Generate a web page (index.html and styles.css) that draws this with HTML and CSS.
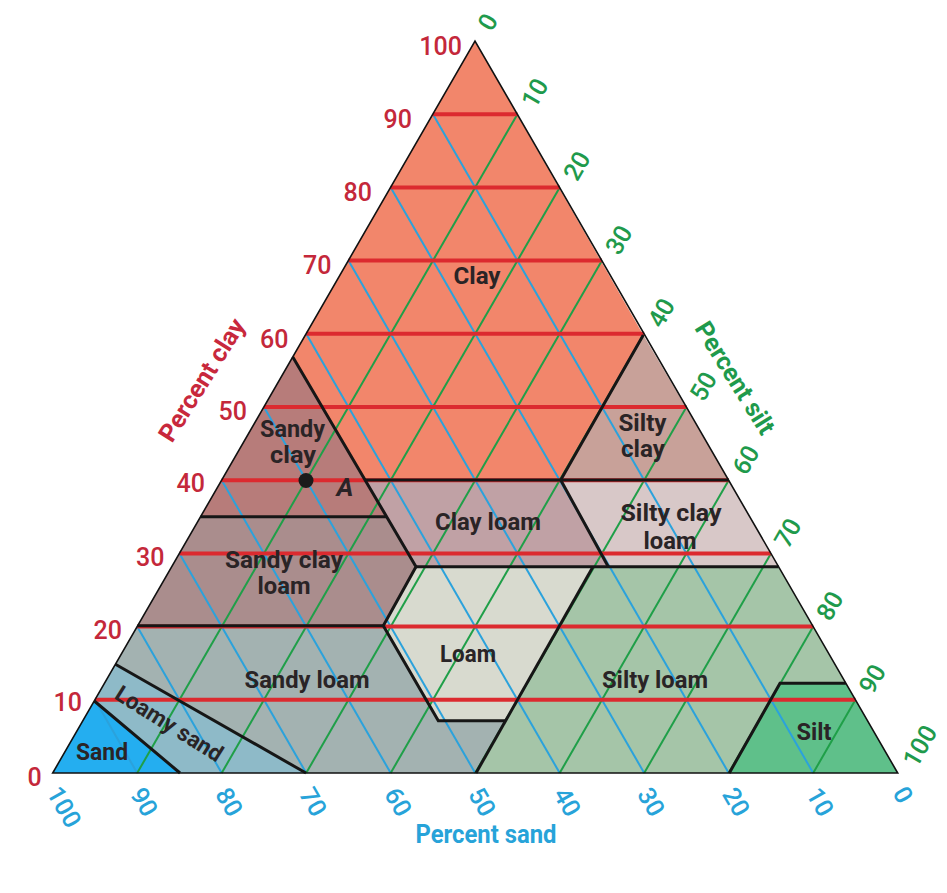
FILE: index.html
```html
<!DOCTYPE html>
<html>
<head>
<meta charset="utf-8">
<title>Soil texture triangle</title>
<link rel="stylesheet" href="styles.css">
</head>
<body>
<div class="page">
<svg class="chart" width="947" height="893" viewBox="0 0 947 893" xmlns="http://www.w3.org/2000/svg">
  <!-- region fills -->
  <g class="regions">
    <polygon class="r-clay" points="475,41 643.3,335 560.7,480 365.1,480 292.8,357"/>
    <polygon class="r-sandyclay" points="292.8,357 365.1,480 386.6,516.7 200.6,516.7"/>
    <polygon class="r-clayloam" points="365.1,480 560.7,480 608.3,566.7 416,566.7 386.6,516.7"/>
    <polygon class="r-siltyclay" points="643.3,335 728.6,480 560.7,480"/>
    <polygon class="r-siltyclayloam" points="560.7,480 728.6,480 778.6,566.7 608.3,566.7"/>
    <polygon class="r-sandyclayloam" points="200.6,516.7 386.6,516.7 416,566.7 383.3,625.7 137.7,625.7"/>
    <polygon class="r-loam" points="416,566.7 593,566.7 505,720.7 438.3,720.7 383.3,625.7"/>
    <polygon class="r-siltyloam" points="593,566.7 778.6,566.7 845.9,683.3 780,683.3 729.3,773 476,773 505,720.7"/>
    <polygon class="r-silt" points="780,683.3 845.9,683.3 897.7,773 729.3,773"/>
    <polygon class="r-sandyloam" points="137.7,625.7 383.3,625.7 438.3,720.7 505,720.7 476,773 306,773 115.4,664.3"/>
    <polygon class="r-loamysand" points="115.4,664.3 306,773 180,773 94.3,701"/>
    <polygon class="r-sand" points="94.3,701 180,773 52.7,773"/>
  </g>

  <!-- constant sand lines -->
  <g class="g-blue">
    <line x1="137.2" y1="773" x2="94.95" y2="699.8"/>
    <line x1="221.7" y1="773" x2="137.2" y2="626.6"/>
    <line x1="306.2" y1="773" x2="179.45" y2="553.4"/>
    <line x1="390.7" y1="773" x2="221.7" y2="480.2"/>
    <line x1="475.2" y1="773" x2="263.95" y2="407"/>
    <line x1="559.7" y1="773" x2="306.2" y2="333.8"/>
    <line x1="644.2" y1="773" x2="348.45" y2="260.6"/>
    <line x1="728.7" y1="773" x2="390.7" y2="187.4"/>
    <line x1="813.2" y1="773" x2="432.95" y2="114.2"/>
  </g>
  <!-- constant silt lines -->
  <g class="g-green">
    <line x1="137.2" y1="773" x2="517.45" y2="114.2"/>
    <line x1="221.7" y1="773" x2="559.7" y2="187.4"/>
    <line x1="306.2" y1="773" x2="601.95" y2="260.6"/>
    <line x1="390.7" y1="773" x2="644.2" y2="333.8"/>
    <line x1="475.2" y1="773" x2="686.45" y2="407"/>
    <line x1="559.7" y1="773" x2="728.7" y2="480.2"/>
    <line x1="644.2" y1="773" x2="770.95" y2="553.4"/>
    <line x1="728.7" y1="773" x2="813.2" y2="626.6"/>
    <line x1="813.2" y1="773" x2="855.45" y2="699.8"/>
  </g>
  <!-- constant clay lines -->
  <g class="g-red">
    <line x1="94.95" y1="699.8" x2="855.45" y2="699.8"/>
    <line x1="137.2" y1="626.6" x2="813.2" y2="626.6"/>
    <line x1="179.45" y1="553.4" x2="770.95" y2="553.4"/>
    <line x1="221.7" y1="480.2" x2="728.7" y2="480.2"/>
    <line x1="263.95" y1="407" x2="686.45" y2="407"/>
    <line x1="306.2" y1="333.8" x2="644.2" y2="333.8"/>
    <line x1="348.45" y1="260.6" x2="601.95" y2="260.6"/>
    <line x1="390.7" y1="187.4" x2="559.7" y2="187.4"/>
    <line x1="432.95" y1="114.2" x2="517.45" y2="114.2"/>
  </g>

  <!-- class boundaries -->
  <g class="bounds">
    <polyline points="292.8,357 416,566.7 383.3,625.7 438.3,720.7 505,720.7"/>
    <polyline points="643.3,335 560.7,480 608.3,566.7"/>
    <line x1="365.1" y1="480" x2="728.6" y2="480"/>
    <line x1="200.6" y1="516.7" x2="386.6" y2="516.7"/>
    <line x1="416" y1="566.7" x2="778.6" y2="566.7"/>
    <line x1="137.7" y1="625.7" x2="383.3" y2="625.7"/>
    <line x1="593" y1="566.7" x2="476" y2="773"/>
    <polyline points="729.3,773 780,683.3 845.9,683.3"/>
    <line x1="115.4" y1="664.3" x2="306" y2="773"/>
    <line x1="94.3" y1="701" x2="180" y2="773"/>
  </g>
  <polygon class="outline" points="52.7,773 897.7,773 475,41"/>

  <!-- sample point -->
  <circle class="dot" cx="306" cy="480.5" r="7.5"/>
  <text class="pt-label" x="345" y="496" text-anchor="middle">A</text>

  <!-- region labels -->
  <g class="lbl">
    <text x="477" y="284" text-anchor="middle" textLength="47" lengthAdjust="spacingAndGlyphs">Clay</text>
    <text x="292.5" y="437" text-anchor="middle" textLength="65" lengthAdjust="spacingAndGlyphs">Sandy</text>
    <text x="293" y="463" text-anchor="middle" textLength="46" lengthAdjust="spacingAndGlyphs">clay</text>
    <text x="642.5" y="431" text-anchor="middle" textLength="48" lengthAdjust="spacingAndGlyphs">Silty</text>
    <text x="643" y="457" text-anchor="middle" textLength="44" lengthAdjust="spacingAndGlyphs">clay</text>
    <text x="488" y="530" text-anchor="middle" textLength="106" lengthAdjust="spacingAndGlyphs">Clay loam</text>
    <text x="671" y="521" text-anchor="middle" textLength="101" lengthAdjust="spacingAndGlyphs">Silty clay</text>
    <text x="670" y="549" text-anchor="middle" textLength="53" lengthAdjust="spacingAndGlyphs">loam</text>
    <text x="284" y="568" text-anchor="middle" textLength="118" lengthAdjust="spacingAndGlyphs">Sandy clay</text>
    <text x="284" y="594" text-anchor="middle" textLength="53" lengthAdjust="spacingAndGlyphs">loam</text>
    <text x="468" y="662" text-anchor="middle" textLength="56" lengthAdjust="spacingAndGlyphs">Loam</text>
    <text x="307" y="688" text-anchor="middle" textLength="125" lengthAdjust="spacingAndGlyphs">Sandy loam</text>
    <text x="655" y="688" text-anchor="middle" textLength="106" lengthAdjust="spacingAndGlyphs">Silty loam</text>
    <text x="814" y="740" text-anchor="middle" textLength="35" lengthAdjust="spacingAndGlyphs">Silt</text>
    <text x="102" y="760" text-anchor="middle" textLength="52" lengthAdjust="spacingAndGlyphs">Sand</text>
    <text x="0" y="0" text-anchor="middle" dominant-baseline="central" textLength="122" lengthAdjust="spacingAndGlyphs" transform="translate(169,724) rotate(32)">Loamy sand</text>
  </g>

  <!-- clay scale -->
  <g class="num clay-num" text-anchor="end" dominant-baseline="central">
    <text x="41.7" y="777">0</text>
    <text x="82" y="702.5">10</text>
    <text x="122" y="630.5">20</text>
    <text x="164.5" y="557">30</text>
    <text x="205" y="483.5">40</text>
    <text x="247" y="411.5">50</text>
    <text x="288.5" y="339">60</text>
    <text x="331.5" y="265">70</text>
    <text x="372" y="192">80</text>
    <text x="412" y="119">90</text>
    <text x="462" y="46.5">100</text>
  </g>

  <!-- silt scale -->
  <g class="num silt-num" text-anchor="middle" dominant-baseline="central">
    <text transform="translate(488,22) rotate(-60)">0</text>
    <text transform="translate(535,93) rotate(-60)">10</text>
    <text transform="translate(577,166) rotate(-60)">20</text>
    <text transform="translate(619,240) rotate(-60)">30</text>
    <text transform="translate(661.5,313) rotate(-60)">40</text>
    <text transform="translate(703.5,386.5) rotate(-60)">50</text>
    <text transform="translate(746,460) rotate(-60)">60</text>
    <text transform="translate(788,533) rotate(-60)">70</text>
    <text transform="translate(830,606) rotate(-60)">80</text>
    <text transform="translate(872.5,679) rotate(-60)">90</text>
    <text transform="translate(920,746) rotate(-60)">100</text>
  </g>

  <!-- sand scale -->
  <g class="num sand-num" text-anchor="middle" dominant-baseline="central">
    <text transform="translate(64,807) rotate(60)">100</text>
    <text transform="translate(144,802) rotate(60)">90</text>
    <text transform="translate(229,802) rotate(60)">80</text>
    <text transform="translate(313,802) rotate(60)">70</text>
    <text transform="translate(398,802) rotate(60)">60</text>
    <text transform="translate(482,802) rotate(60)">50</text>
    <text transform="translate(567,802) rotate(60)">40</text>
    <text transform="translate(651,802) rotate(60)">30</text>
    <text transform="translate(736,802) rotate(60)">20</text>
    <text transform="translate(820,802) rotate(60)">10</text>
    <text transform="translate(903,795) rotate(60)">0</text>
  </g>

  <!-- axis titles -->
  <text class="axis clay-axis" text-anchor="middle" dominant-baseline="central" textLength="140" lengthAdjust="spacingAndGlyphs" transform="translate(202,380) rotate(-58)">Percent clay</text>
  <text class="axis silt-axis" text-anchor="middle" dominant-baseline="central" textLength="128" lengthAdjust="spacingAndGlyphs" transform="translate(735,378) rotate(58)">Percent silt</text>
  <text class="axis sand-axis" x="486" y="843" text-anchor="middle" textLength="141" lengthAdjust="spacingAndGlyphs">Percent sand</text>
</svg>
</div>
</body>
</html>
```

FILE: styles.css
```css
html, body {
  margin: 0;
  padding: 0;
  background: #ffffff;
}

.page {
  width: 947px;
  height: 893px;
  overflow: hidden;
}

.chart {
  display: block;
  font-family: Roboto, "Liberation Sans", Arial, sans-serif;
}

/* region fills */
.r-clay { fill: #f2866b; }
.r-sandyclay { fill: #b77c7a; }
.r-clayloam { fill: #c0a1a5; }
.r-siltyclay { fill: #c8a199; }
.r-siltyclayloam { fill: #d8c8c8; }
.r-sandyclayloam { fill: #aa8d8d; }
.r-loam { fill: #d8dacf; }
.r-siltyloam { fill: #a5c5a8; }
.r-silt { fill: #5fc08a; }
.r-sandyloam { fill: #a3b2b1; }
.r-loamysand { fill: #8ebac8; }
.r-sand { fill: #24aef0; }

/* grid */
.g-blue line { stroke: #2ba2dc; stroke-width: 2; }
.g-green line { stroke: #1f9f48; stroke-width: 2; }
.g-red line { stroke: #dc2a2f; stroke-width: 4; }

.bounds line,
.bounds polyline {
  stroke: #161616;
  stroke-width: 3;
  fill: none;
  stroke-linejoin: miter;
}

.outline {
  fill: none;
  stroke: #111111;
  stroke-width: 1.6;
  stroke-linejoin: miter;
}

.dot { fill: #1b1b1b; }

.pt-label {
  font-size: 26px;
  font-weight: bold;
  font-style: italic;
  fill: #2a2326;
}

.lbl text {
  font-size: 23px;
  font-weight: bold;
  fill: #2a2426;
}

.num text {
  font-size: 25px;
  font-weight: 500;
}

.clay-num text { fill: #c4283a; }
.silt-num text { fill: #1f9a4c; }
.sand-num text { fill: #27a3d9; }

.axis {
  font-size: 25px;
  font-weight: bold;
}

.clay-axis { fill: #c8283c; }
.silt-axis { fill: #1f9a4c; }
.sand-axis { fill: #27a3d9; }
```
